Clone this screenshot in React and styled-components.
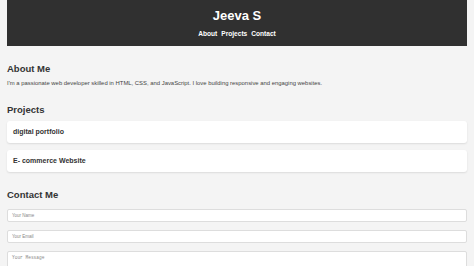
import React from "react";
import styled, { createGlobalStyle } from "styled-components";

const GlobalStyle = createGlobalStyle`
    body {
        margin: 0;
        background: #f4f4f4;
        font-family: "Liberation Sans", Arial, sans-serif;
    }
`;

const App = () => {
    return (
        <>
            <GlobalStyle />
            <StyledPage>
                <StyledHeader>
                    <StyledName>Jeeva S</StyledName>
                    <StyledNav>
                        <StyledNavLink href="#about">About</StyledNavLink>
                        <StyledNavLink href="#projects">Projects</StyledNavLink>
                        <StyledNavLink href="#contact">Contact</StyledNavLink>
                    </StyledNav>
                </StyledHeader>
                <StyledSection id="about">
                    <StyledTitle>About Me</StyledTitle>
                    <StyledText>
                        I'm a passionate web developer skilled in HTML, CSS, and JavaScript. I love building responsive and engaging websites.
                    </StyledText>
                </StyledSection>
                <StyledSection id="projects">
                    <StyledTitle>Projects</StyledTitle>
                    <StyledProjects>
                        <StyledCard>digital portfolio</StyledCard>
                        <StyledCard>E- commerce Website</StyledCard>
                    </StyledProjects>
                </StyledSection>
                <StyledSection id="contact">
                    <StyledTitle>Contact Me</StyledTitle>
                    <StyledForm>
                        <StyledInput type="text" placeholder="Your Name" />
                        <StyledInput type="email" placeholder="Your Email" />
                        <StyledTextarea placeholder="Your Message" />
                    </StyledForm>
                </StyledSection>
            </StyledPage>
        </>
    );
};

const StyledPage = styled.div`
    padding: 0 7px 0 7px;
    width: 460px;
`;
const StyledHeader = styled.header`
    background: #303030;
    color: #fff;
    text-align: center;
    padding: 9px 0 8px 0;
`;
const StyledName = styled.h1`
    margin: 0 0 7px 0;
    font-size: 13px;
    line-height: 14px;
    font-weight: bold;
`;
const StyledNav = styled.nav`
    display: flex;
    justify-content: center;
    gap: 4px;
`;
const StyledNavLink = styled.a`
    color: #fff;
    text-decoration: none;
    font-size: 6.6px;
    line-height: 8px;
    font-weight: bold;
`;
const StyledSection = styled.section`
    padding-top: 17px;
`;
const StyledTitle = styled.h2`
    margin: 0 0 5px 0;
    font-size: 9.5px;
    line-height: 11px;
    color: #333;
`;
const StyledText = styled.p`
    margin: 0;
    font-size: 5.9px;
    line-height: 8px;
    color: #444;
`;
const StyledProjects = styled.div`
    display: flex;
    flex-direction: column;
    gap: 7px;
    padding-top: 1px;
`;
const StyledCard = styled.div`
    height: 22px;
    line-height: 22px;
    padding: 0 6px;
    background: #fff;
    border-radius: 3px;
    box-shadow: 0 1px 2px rgba(0, 0, 0, 0.1);
    font-size: 7px;
    font-weight: bold;
    color: #333;
`;
const StyledForm = styled.form`
    display: flex;
    flex-direction: column;
    gap: 8px;
    padding-top: 4px;
`;
const StyledInput = styled.input`
    box-sizing: border-box;
    height: 13px;
    width: 100%;
    margin: 0;
    padding: 0 4px;
    border: 1px solid #ddd;
    border-radius: 2px;
    background: #fff;
    font-family: "Liberation Sans", Arial, sans-serif;
    font-size: 4.5px;
    outline: none;
    &::placeholder {
        color: #888;
    }
`;
const StyledTextarea = styled.textarea`
    box-sizing: border-box;
    height: 40px;
    width: 100%;
    margin: 0;
    padding: 3px 4px;
    border: 1px solid #ddd;
    border-radius: 2px;
    background: #fff;
    font-family: "Liberation Mono", monospace;
    font-size: 4.5px;
    resize: none;
    outline: none;
    &::placeholder {
        color: #888;
    }
`;

export default App;
